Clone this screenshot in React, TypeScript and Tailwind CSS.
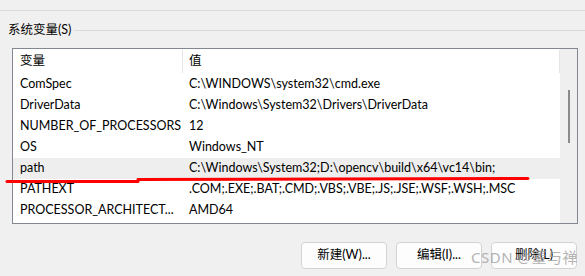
const rows = [
  { name: 'ComSpec', value: 'C:\\WINDOWS\\system32\\cmd.exe' },
  { name: 'DriverData', value: 'C:\\Windows\\System32\\Drivers\\DriverData' },
  { name: 'NUMBER_OF_PROCESSORS', value: '12' },
  { name: 'OS', value: 'Windows_NT' },
  { name: 'path', value: 'C:\\Windows\\System32;D:\\opencv\\build\\x64\\vc14\\bin;', active: true },
  { name: 'PATHEXT', value: '.COM;.EXE;.BAT;.CMD;.VBS;.VBE;.JS;.JSE;.WSF;.WSH;.MSC' },
  { name: 'PROCESSOR_ARCHITECT...', value: 'AMD64' },
];

const buttons = ['新建(W)...', '编辑(I)...', '删除(L)'];

const App = () => {
  return (
    <div
      className="relative w-[585px] h-[276px] overflow-hidden bg-[#f0f0f0] text-[12.5px] text-[#000]"
      style={{ fontFamily: 'Lato, "Noto Sans CJK SC", sans-serif' }}
    >
      <div className="h-[11px] border-b border-[#d9d9d9]" />

      {/* group header */}
      <div className="flex items-center h-[26px] mt-[6px] pl-[8px]">
        <span className="leading-none">系统变量(S)</span>
        <div className="flex-1 ml-[3px] border-t border-[#d9d9d9]" />
      </div>

      {/* list */}
      <div className="ml-[12px] mt-[5px] w-[566px] h-[176px] border border-[#828790] bg-white flex">
        <div className="flex-1 flex flex-col">
          <div className="flex h-[25px] items-center">
            <div className="w-[169px] pl-[7px]">变量</div>
            <div className="w-px h-[23px] bg-[#e5e5e5]" />
            <div className="flex-1 pl-[6px]">值</div>
            <div className="w-px h-[23px] bg-[#e5e5e5]" />
          </div>
          {rows.map((r) => (
            <div
              key={r.name}
              className={`flex h-[21px] items-center whitespace-nowrap ${r.active ? 'bg-[#eeeeee]' : ''}`}
            >
              <div className="w-[170px] pl-[7px] overflow-hidden">{r.name}</div>
              <div className="flex-1 pl-[6px]">{r.value}</div>
            </div>
          ))}
        </div>
        <div className="w-[17px] bg-[#efefef] flex justify-center pt-[41px]">
          <div className="w-[2px] h-[53px] bg-[#8a8a8a]" />
        </div>
      </div>

      {/* buttons */}
      <div className="flex justify-end gap-[9px] mt-[18px] pr-[8px]">
        {buttons.map((b) => (
          <button
            key={b}
            className="w-[86px] h-[27px] rounded-[4px] border border-[#d3d3d3] bg-[#fdfdfd] text-[12.5px]"
          >
            {b}
          </button>
        ))}
      </div>

      {/* red annotation */}
      <svg className="absolute left-0 top-0" width="585" height="276">
        <path d="M7 181.5 L138 181.5" stroke="#ff0000" strokeWidth="3" strokeLinecap="round" />
        <path d="M138 179.5 L528 178.5" stroke="#ff0000" strokeWidth="3" strokeLinecap="round" />
      </svg>

      {/* watermark */}
      <div
        className="absolute left-[471px] top-[250px] text-[15px] text-[#a0a0a0]/80 leading-none tracking-[0.5px]"
        style={{ fontFamily: '"Noto Sans", "Noto Sans CJK SC", sans-serif' }}
      >
        CSDN @董与禅
      </div>
    </div>
  );
};

export default App;
